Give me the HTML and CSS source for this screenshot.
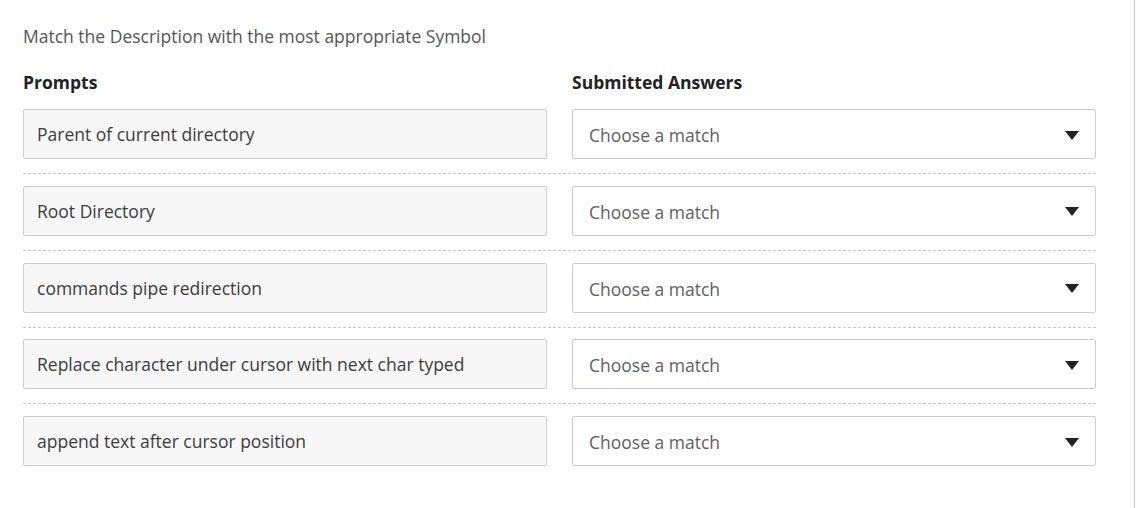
FILE: index.html
```html
<!DOCTYPE html>
<html lang="en">
<head>
<meta charset="utf-8">
<title>Matching question</title>
<link rel="stylesheet" href="styles.css">
</head>
<body>
<div class="page">
  <p class="instructions">Match the Description with the most appropriate Symbol</p>
  <div class="headers">
    <h3 class="col-title">Prompts</h3>
    <h3 class="col-title">Submitted Answers</h3>
  </div>
  <div class="rows">
    <div class="row">
      <div class="prompt">Parent of current directory</div>
      <div class="select"><span class="placeholder">Choose a match</span><span class="caret"></span></div>
    </div>
    <div class="row">
      <div class="prompt">Root Directory</div>
      <div class="select"><span class="placeholder">Choose a match</span><span class="caret"></span></div>
    </div>
    <div class="row">
      <div class="prompt">commands pipe redirection</div>
      <div class="select"><span class="placeholder">Choose a match</span><span class="caret"></span></div>
    </div>
    <div class="row">
      <div class="prompt">Replace character under cursor with next char typed</div>
      <div class="select"><span class="placeholder">Choose a match</span><span class="caret"></span></div>
    </div>
    <div class="row">
      <div class="prompt">append text after cursor position</div>
      <div class="select"><span class="placeholder">Choose a match</span><span class="caret"></span></div>
    </div>
  </div>
</div>
</body>
</html>
```

FILE: styles.css
```css
* { box-sizing: border-box; }
html, body { margin: 0; padding: 0; background: #fff; }
body {
  font-family: "Open Sans", "Liberation Sans", sans-serif;
  color: #333;
}
.page {
  width: 1135px;
  height: 508px;
  border-right: 1px solid #c8c8c8;
  padding: 24px 0 0 23px;
}
.instructions {
  margin: 0;
  font-size: 17.5px;
  line-height: 24px;
  color: #555;
}
.headers {
  display: grid;
  grid-template-columns: 524px 524px;
  column-gap: 25px;
  margin-top: 22px;
}
.col-title {
  margin: 0;
  font-size: 17.5px;
  line-height: 24px;
  font-weight: 700;
  color: #222;
}
.rows {
  width: 1073px;
  margin-top: 15px;
}
.row {
  display: grid;
  grid-template-columns: 524px 524px;
  column-gap: 25px;
  padding: 11.75px 0 14px;
  border-bottom: 1px dashed #c8c8c8;
}
.row:first-child { padding-top: 0; }
.row:last-child { border-bottom: none; }
.prompt {
  height: 50px;
  display: flex;
  align-items: center;
  padding: 0 13px;
  background: #f7f7f7;
  border: 1px solid #ccc;
  border-radius: 2px;
  font-size: 17.5px;
  color: #3c3c3c;
}
.select {
  height: 50px;
  display: flex;
  align-items: center;
  justify-content: space-between;
  padding: 2px 16px 0 16px;
  background: #fff;
  border: 1px solid #ccc;
  border-radius: 2px;
  font-size: 17.5px;
}
.placeholder { color: #606060; }
.caret {
  width: 0;
  height: 0;
  border-left: 7px solid transparent;
  border-right: 7px solid transparent;
  border-top: 9px solid #222;
}
```
